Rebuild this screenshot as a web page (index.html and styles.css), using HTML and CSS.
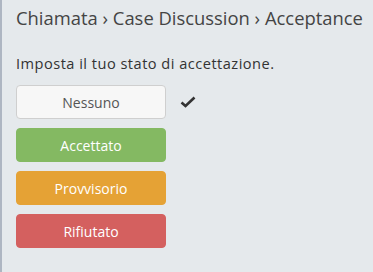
FILE: index.html
```html
<!DOCTYPE html>
<html lang="it">
<head>
<meta charset="utf-8">
<link rel="stylesheet" href="styles.css">
</head>
<body>
<div class="panel">
  <h1 class="crumbs">Chiamata › Case Discussion › Acceptance</h1>
  <p class="desc">Imposta il tuo stato di accettazione.</p>
  <div class="options">
    <div class="row">
      <button class="btn btn-none">Nessuno</button>
      <svg class="check" width="16" height="12" viewBox="0 0 16 12"><path d="M1.5 6.5 L5.5 10 L14.5 1.5" fill="none" stroke="#333" stroke-width="2.6"/></svg>
    </div>
    <div class="row"><button class="btn btn-green">Accettato</button></div>
    <div class="row"><button class="btn btn-orange">Provvisorio</button></div>
    <div class="row"><button class="btn btn-red">Rifiutato</button></div>
  </div>
</div>
</body>
</html>
```
FILE: styles.css
```css
html, body {
  margin: 0;
  padding: 0;
  height: 100%;
}
body {
  background: #e5e9ec;
  font-family: "Open Sans", "Liberation Sans", sans-serif;
}
.panel {
  box-sizing: border-box;
  height: 100%;
  border-left: 2px solid #aeb6c2;
  padding: 4px 0 0 14px;
}
.crumbs {
  margin: 0;
  font-size: 18.4px;
  font-weight: 400;
  color: #444;
  line-height: 28px;
  white-space: nowrap;
}
.desc {
  margin: 21px 0 0 0;
  font-size: 14.6px;
  letter-spacing: 0.48px;
  color: #333;
  line-height: 20px;
}
.options {
  margin-top: 12px;
  display: flex;
  flex-direction: column;
  gap: 9px;
}
.row {
  display: flex;
  align-items: center;
  gap: 14px;
}
.btn {
  box-sizing: border-box;
  width: 150px;
  height: 34px;
  border-radius: 4px;
  border: 1px solid transparent;
  font-family: inherit;
  font-size: 14px;
  padding: 0;
  color: #fff;
  cursor: pointer;
}
.btn-none {
  background: #f7f7f7;
  border-color: #cfcfcf;
  color: #555;
}
.btn-green { background: #84b962; border-color: #84b962; }
.btn-orange { background: #e5a235; border-color: #e5a235; }
.btn-red { background: #d4605f; border-color: #d4605f; }
.check { display: block; }
```
